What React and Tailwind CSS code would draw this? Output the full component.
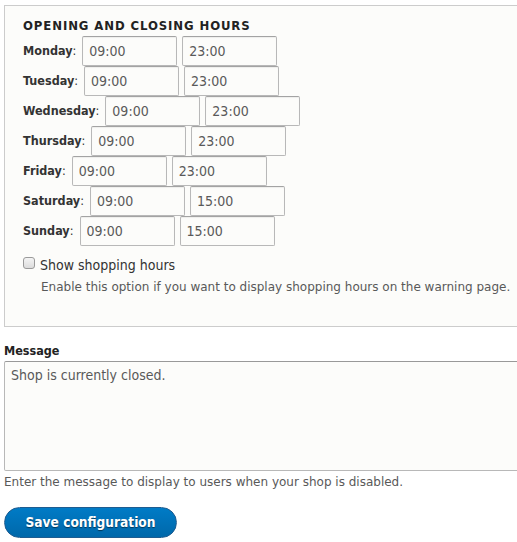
import React from "react";

const days = [
  ["Monday", "09:00", "23:00"],
  ["Tuesday", "09:00", "23:00"],
  ["Wednesday", "09:00", "23:00"],
  ["Thursday", "09:00", "23:00"],
  ["Friday", "09:00", "23:00"],
  ["Saturday", "09:00", "15:00"],
  ["Sunday", "09:00", "15:00"],
];

function TimeInput({ value }) {
  return (
    <input
      type="text"
      defaultValue={value}
      className="box-border h-[30px] w-[95px] rounded-[2px] border border-[#b8b8b8] border-t-[#a3a3a3] bg-[#fcfcfa] px-[6px] font-['DejaVu_Sans',sans-serif] text-[14px] text-[#595959] font-stretch-condensed shadow-[inset_0_1px_1px_rgba(0,0,0,0.06)] outline-none"
    />
  );
}

export default function App() {
  return (
    <div className="w-full overflow-hidden bg-white font-['DejaVu_Sans',sans-serif] text-[#333]">
      <div className="w-[580px] pl-[4px] pt-[5px]">
        <div className="box-border h-[322px] border border-[#ccc] bg-[#fcfcfa] pl-[18px] pt-[12px]">
          <div className="text-[13px] leading-[16px] font-bold font-stretch-condensed uppercase tracking-[0.9px] text-[#222]">
            Opening and closing hours
          </div>
          <div className="mt-[2px] flex flex-col">
            {days.map(([d, a, b]) => (
              <div key={d} className="flex h-[30px] items-center">
                <span className="mr-[6px] text-[12.5px] font-stretch-condensed text-[#333]">
                  <span className="font-bold">{d}</span>:
                </span>
                <TimeInput value={a} />
                <span className="w-[5px]" />
                <TimeInput value={b} />
              </div>
            ))}
          </div>
          <div className="mt-[11px] flex items-start">
            <span className="box-border h-[12px] w-[12px] rounded-[3px] border border-[#9a9a9a] bg-gradient-to-b from-[#f4f4f4] to-[#dcdcdc]" />
            <span className="ml-[5px] text-[14px] leading-[17px] font-stretch-condensed text-[#333] -mt-[0px]">
              Show shopping hours
            </span>
          </div>
          <div className="ml-[18px] mt-[6px] text-[12px] leading-[15px] text-[#595959]">
            Enable this option if you want to display shopping hours on the warning page.
          </div>
        </div>

        <div className="mt-[16px] text-[12.5px] leading-[15px] font-bold font-stretch-condensed text-[#222]">
          Message
        </div>
        <textarea
          defaultValue="Shop is currently closed."
          className="mt-[3px] box-border block h-[110px] w-full resize-none rounded-[2px] border border-[#b8b8b8] border-t-[#999] bg-[#fcfcfa] px-[6px] pt-[5px] font-['DejaVu_Sans',sans-serif] text-[14px] leading-[17px] text-[#595959] font-stretch-condensed outline-none"
        />
        <div className="mt-[4px] text-[12px] leading-[15px] text-[#595959]">
          Enter the message to display to users when your shop is disabled.
        </div>
        <button
          type="button"
          className="mt-[17px] box-border flex h-[31px] w-[173px] items-center justify-center rounded-full border border-[#1e5c90] bg-gradient-to-b from-[#007bc6] to-[#0068aa] text-[13.6px] font-bold font-stretch-condensed text-white [text-shadow:0_1px_1px_rgba(0,0,0,0.5)]"
        >
          Save configuration
        </button>
      </div>
    </div>
  );
}
